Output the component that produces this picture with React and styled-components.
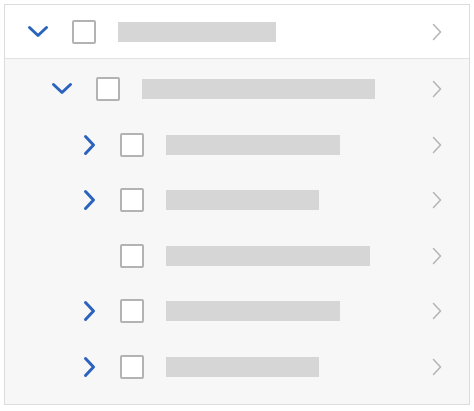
import React from "react";
import styled, { createGlobalStyle } from "styled-components";

const GlobalStyle = createGlobalStyle`
  html, body {
    margin: 0;
    padding: 0;
    background: #ffffff;
    font-family: "Open Sans", "Liberation Sans", sans-serif;
  }
`;

const Page = styled.div`
  padding: 4px;
  width: 474px;
  box-sizing: border-box;
`;

const Tree = styled.div`
  border: 1px solid #dcdcdc;
  background: #f7f7f7;
  height: 401px;
  box-sizing: border-box;
  overflow: hidden;
`;

const Row = styled.div`
  display: flex;
  align-items: center;
  height: ${(p) => (p.$top ? "53px" : "55.6px")};
  padding-left: ${(p) => 21 + p.$level * 24}px;
  padding-right: 27px;
  background: ${(p) => (p.$top ? "#ffffff" : "transparent")};
  border-bottom: ${(p) => (p.$top ? "1px solid #e2e2e2" : "none")};
`;

const Children = styled.div`
  padding-top: 2.2px;
`;

const Toggle = styled.div`
  width: 24px;
  height: 24px;
  display: flex;
  align-items: center;
  justify-content: center;
  flex-shrink: 0;
  margin-right: 22px;
`;

const Checkbox = styled.div`
  width: 24px;
  height: 24px;
  box-sizing: border-box;
  border: 2px solid #b3b3b3;
  border-radius: 2px;
  background: #ffffff;
  flex-shrink: 0;
  margin-right: 22px;
`;

const Bar = styled.div`
  height: 20px;
  background: #d6d6d6;
  flex-shrink: 0;
`;

const Spacer = styled.div`
  flex: 1;
`;

const RightIcon = styled.svg`
  margin-left: 6px;
`;

const ChevronDown = () => (
  <svg width="22" height="13" viewBox="0 0 22 13">
    <path d="M2.5 2.5 L11 10.5 L19.5 2.5" fill="none" stroke="#2a63bd" strokeWidth="3" strokeLinecap="round" strokeLinejoin="round" />
  </svg>
);

const ChevronRight = () => (
  <RightIcon width="13" height="22" viewBox="0 0 13 22">
    <path d="M2.5 2.5 L10.5 11 L2.5 19.5" fill="none" stroke="#2a63bd" strokeWidth="3" strokeLinecap="round" strokeLinejoin="round" />
  </RightIcon>
);

const Arrow = () => (
  <svg width="10" height="18" viewBox="0 0 10 18">
    <path d="M1.5 1.5 L8.5 9 L1.5 16.5" fill="none" stroke="#b4b4b4" strokeWidth="1.5" strokeLinecap="round" strokeLinejoin="round" />
  </svg>
);

function Item({ level, toggle, width, top }) {
  return (
    <Row $level={level} $top={top}>
      <Toggle>
        {toggle === "open" && <ChevronDown />}
        {toggle === "closed" && <ChevronRight />}
      </Toggle>
      <Checkbox />
      <Bar style={{ width }} />
      <Spacer />
      <Arrow />
    </Row>
  );
}

const children = [
  { level: 2, toggle: "closed", width: 174 },
  { level: 2, toggle: "closed", width: 153 },
  { level: 2, toggle: "none", width: 204 },
  { level: 2, toggle: "closed", width: 174 },
  { level: 2, toggle: "closed", width: 153 },
];

export default function App() {
  return (
    <>
      <GlobalStyle />
      <Page>
        <Tree>
          <Item top level={0} toggle="open" width={158} />
          <Children>
            <Item level={1} toggle="open" width={233} />
            {children.map((c, i) => (
              <Item key={i} {...c} />
            ))}
          </Children>
        </Tree>
      </Page>
    </>
  );
}
